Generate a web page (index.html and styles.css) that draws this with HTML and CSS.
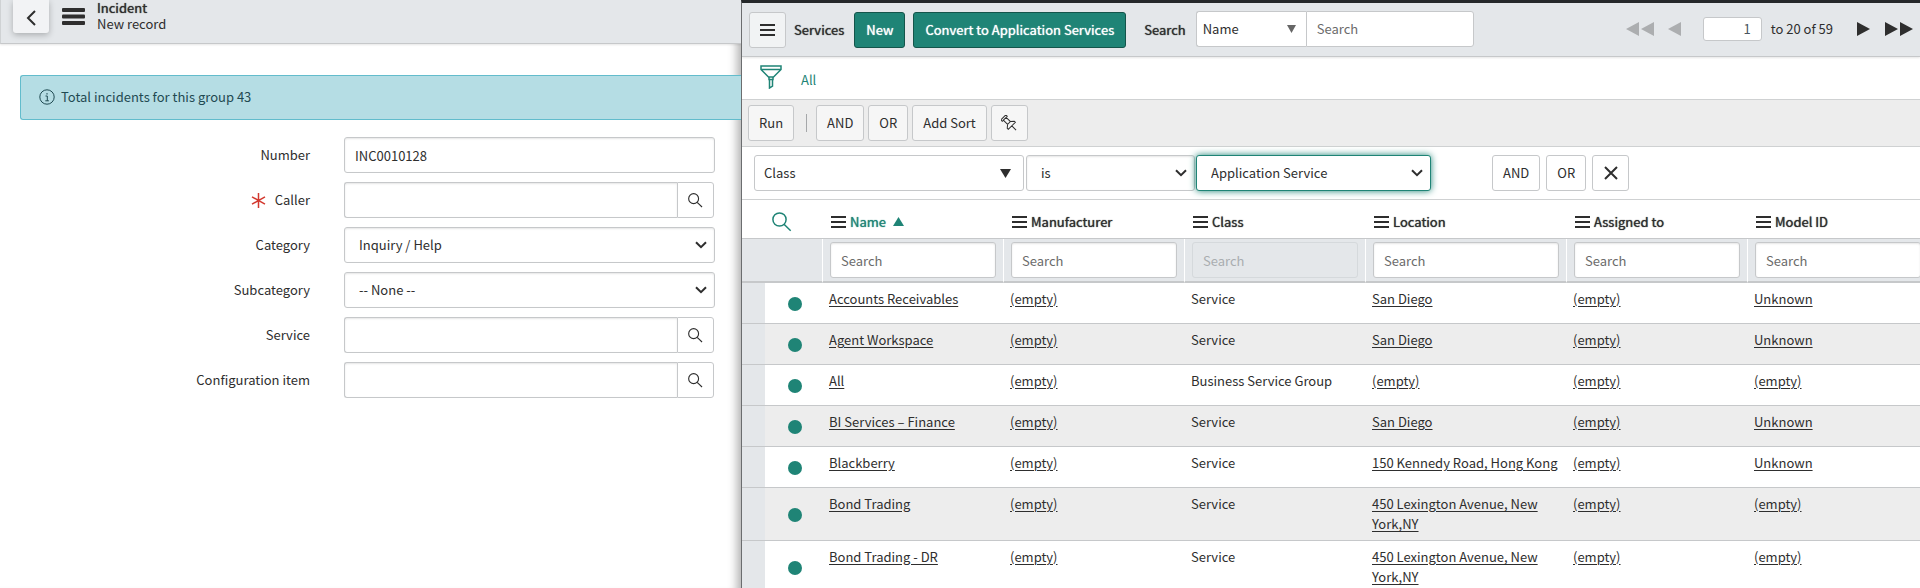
FILE: index.html
```html
<!DOCTYPE html>
<html lang="en">
<head>
<meta charset="utf-8">
<title>Incident | New record</title>
<link rel="stylesheet" href="styles.css">
</head>
<body>
<svg class="sprite" aria-hidden="true">
  <symbol id="i-search" viewBox="0 0 20 20"><circle cx="7.5" cy="7.5" r="6.6"/><path d="M12.2 12.4l1.3 1.3M13.3 13.5l5.4 5.2"/></symbol>
  <symbol id="i-chevron" viewBox="0 0 12 8"><path d="M1 1.2l5 5 5-5"/></symbol>
  <symbol id="i-menu" viewBox="0 0 15 12"><path d="M0 1h15M0 6h15M0 11h15"/></symbol>
</svg>
<div class="desktop">
  <section class="record">
    <header class="record-head">
      <button class="back" type="button" aria-label="Back"><svg width="10" height="16" viewBox="0 0 10 16"><path d="M9 1L2 8l7 7"/></svg></button>
      <svg class="burger" width="23" height="17" viewBox="0 0 23 17"><rect width="23" height="4" rx="1"/><rect y="6.5" width="23" height="4" rx="1"/><rect y="13" width="23" height="4" rx="1"/></svg>
      <h1 class="record-title"><span class="strong">Incident</span><span>New record</span></h1>
    </header>
    <div class="banner">
      <svg width="16" height="16" viewBox="0 0 16 16"><circle cx="8" cy="8" r="7.2"/><path d="M8 4v1.6M6.5 7h1.8v4.8M6.3 11.8h3.6"/></svg>
      <span>Total incidents for this group 43</span>
    </div>
    <form class="fields">
      <label for="number">Number</label>
      <input class="box" id="number" value="INC0010128">
      <label for="caller"><svg class="req" width="15" height="15" viewBox="0 0 15 15"><path d="M7.5 0v15M1 3.8l13 7.4M14 3.8L1 11.2"/></svg>Caller</label>
      <div class="lookup"><input id="caller"><button type="button" aria-label="Look up caller"><svg class="glass"><use href="#i-search"/></svg></button></div>
      <label for="category">Category</label>
      <div class="drop"><select id="category"><option>Inquiry / Help</option></select><svg class="chev"><use href="#i-chevron"/></svg></div>
      <label for="subcategory">Subcategory</label>
      <div class="drop"><select id="subcategory"><option>-- None --</option></select><svg class="chev"><use href="#i-chevron"/></svg></div>
      <label for="service">Service</label>
      <div class="lookup"><input id="service"><button type="button" aria-label="Look up service"><svg class="glass"><use href="#i-search"/></svg></button></div>
      <label for="ci">Configuration item</label>
      <div class="lookup"><input id="ci"><button type="button" aria-label="Look up configuration item"><svg class="glass"><use href="#i-search"/></svg></button></div>
    </form>
  </section>

  <section class="popup">
    <header class="list-head">
      <button class="btn pale icon" type="button" aria-label="List menu"><svg class="lines"><use href="#i-menu"/></svg></button>
      <h2 class="list-title strong">Services</h2>
      <button class="btn primary strong" type="button">New</button>
      <button class="btn primary strong convert" type="button">Convert to Application Services</button>
      <label class="search-label strong" for="field">Search</label>
      <div class="search">
        <div class="drop"><select id="field"><option>Name</option></select><svg class="tri" width="9" height="8" viewBox="0 0 9 8"><path d="M0 0h9L4.500 8z"/></svg></div>
        <input aria-label="Search text" placeholder="Search">
      </div>
      <nav class="pager" aria-label="Pages">
        <button class="off" type="button" aria-label="First page"><svg width="28" height="14" viewBox="0 0 28 14"><path d="M13 0v14L0 7zM28 0v14L15 7z"/></svg></button>
        <button class="off prev" type="button" aria-label="Previous page"><svg width="13" height="14" viewBox="0 0 13 14"><path d="M13 0v14L0 7z"/></svg></button>
        <input id="row" value="1"><label for="row">to 20 of 59</label>
        <button class="next" type="button" aria-label="Next page"><svg width="13" height="14" viewBox="0 0 13 14"><path d="M0 0v14l13-7z"/></svg></button>
        <button class="last" type="button" aria-label="Last page"><svg width="28" height="14" viewBox="0 0 28 14"><path d="M0 0v14l13-7zM15 0v14l13-7z"/></svg></button>
      </nav>
    </header>
    <div class="crumbs">
      <svg width="22" height="24" viewBox="0 0 22 24"><path d="M1 1h20v3.500L13.500 12h-5L1 4.500zM1 4.500h20M9 12v2.500h4V12M9.500 14.500h3V21l-3 2z"/></svg>
      <a href="#all">All</a>
    </div>
    <div class="filter-bar">
      <button class="btn soft" type="button">Run</button>
      <span class="rule"></span>
      <button class="btn soft" type="button">AND</button>
      <button class="btn soft" type="button">OR</button>
      <button class="btn soft" type="button">Add Sort</button>
      <button class="btn soft icon pin" type="button" aria-label="Pin filter"><svg width="16" height="16" viewBox="-8 -8 16 16"><path transform="rotate(-45)" d="M-3.500-8h7v2h-7zM-2-6h4V0h-4zM-2 0l-3 2.500V4H5V2.500L2 0M0 4v6"/></svg></button>
    </div>
    <form class="condition">
      <div class="drop class"><select aria-label="Field"><option>Class</option></select><svg class="tri" width="11" height="9" viewBox="0 0 11 9"><path d="M0 0h11L5.500 9z"/></svg></div>
      <div class="drop oper"><select aria-label="Operator"><option>is</option></select><svg class="chev"><use href="#i-chevron"/></svg></div>
      <div class="drop value"><select aria-label="Value"><option>Application Service</option></select><svg class="chev"><use href="#i-chevron"/></svg></div>
      <div class="condition-actions">
        <button class="btn" type="button">AND</button>
        <button class="btn" type="button">OR</button>
        <button class="btn icon cross" type="button" aria-label="Remove condition"><svg width="14" height="14" viewBox="0 0 14 14"><path d="M1 1l12 12M13 1L1 13"/></svg></button>
      </div>
    </form>
    <table class="grid">
      <colgroup><col class="c-gutter"><col class="c-state"><col><col><col><col class="c-loc"><col><col></colgroup>
      <thead>
        <tr class="names">
          <th colspan="2"><button class="find" type="button" aria-label="Toggle column search"><svg><use href="#i-search"/></svg></button></th>
          <th class="sorted"><span class="strong"><svg class="lines"><use href="#i-menu"/></svg>Name<svg class="asc" width="11" height="9" viewBox="0 0 11 9"><path d="M0 9h11L5.500 0z"/></svg></span></th>
          <th><span class="strong"><svg class="lines"><use href="#i-menu"/></svg>Manufacturer</span></th>
          <th><span class="strong"><svg class="lines"><use href="#i-menu"/></svg>Class</span></th>
          <th><span class="strong"><svg class="lines"><use href="#i-menu"/></svg>Location</span></th>
          <th><span class="strong"><svg class="lines"><use href="#i-menu"/></svg>Assigned to</span></th>
          <th><span class="strong"><svg class="lines"><use href="#i-menu"/></svg>Model ID</span></th>
        </tr>
        <tr class="searches">
          <td colspan="2"></td>
          <td><input class="box" aria-label="Search Name" placeholder="Search"></td>
          <td><input class="box" aria-label="Search Manufacturer" placeholder="Search"></td>
          <td><input class="box" aria-label="Search Class" placeholder="Search" disabled></td>
          <td><input class="box" aria-label="Search Location" placeholder="Search"></td>
          <td><input class="box" aria-label="Search Assigned to" placeholder="Search"></td>
          <td><input class="box" aria-label="Search Model ID" placeholder="Search"></td>
        </tr>
      </thead>
      <tbody>
        <tr><td></td><td><i class="dot"></i></td><td><a href="#r">Accounts Receivables</a></td><td><a href="#r">(empty)</a></td><td>Service</td><td><a href="#r">San Diego</a></td><td><a href="#r">(empty)</a></td><td><a href="#r">Unknown</a></td></tr>
        <tr><td></td><td><i class="dot"></i></td><td><a href="#r">Agent Workspace</a></td><td><a href="#r">(empty)</a></td><td>Service</td><td><a href="#r">San Diego</a></td><td><a href="#r">(empty)</a></td><td><a href="#r">Unknown</a></td></tr>
        <tr><td></td><td><i class="dot"></i></td><td><a href="#r">All</a></td><td><a href="#r">(empty)</a></td><td>Business Service Group</td><td><a href="#r">(empty)</a></td><td><a href="#r">(empty)</a></td><td><a href="#r">(empty)</a></td></tr>
        <tr><td></td><td><i class="dot"></i></td><td><a href="#r">BI Services – Finance</a></td><td><a href="#r">(empty)</a></td><td>Service</td><td><a href="#r">San Diego</a></td><td><a href="#r">(empty)</a></td><td><a href="#r">Unknown</a></td></tr>
        <tr><td></td><td><i class="dot"></i></td><td><a href="#r">Blackberry</a></td><td><a href="#r">(empty)</a></td><td>Service</td><td><a href="#r">150 Kennedy Road, Hong Kong</a></td><td><a href="#r">(empty)</a></td><td><a href="#r">Unknown</a></td></tr>
        <tr><td></td><td><i class="dot"></i></td><td><a href="#r">Bond Trading</a></td><td><a href="#r">(empty)</a></td><td>Service</td><td><a href="#r">450 Lexington Avenue, New York,NY</a></td><td><a href="#r">(empty)</a></td><td><a href="#r">(empty)</a></td></tr>
        <tr><td></td><td><i class="dot"></i></td><td><a href="#r">Bond Trading - DR</a></td><td><a href="#r">(empty)</a></td><td>Service</td><td><a href="#r">450 Lexington Avenue, New York,NY</a></td><td><a href="#r">(empty)</a></td><td><a href="#r">(empty)</a></td></tr>
      </tbody>
    </table>
  </section>
</div>
</body>
</html>
```
FILE: styles.css
```css
* { box-sizing: border-box; }
body, input, select, button {
  font: 13px/20px "Noto Sans CJK SC", "Noto Sans", sans-serif;
  color: #2e2e2e;
}
body { margin: 0; background: #fff; overflow: hidden; }
h1, h2 { margin: 0; font-size: 13px; font-weight: 400; }
button { margin: 0; cursor: pointer; }
svg { display: block; flex: none; fill: none; stroke: currentColor; }
input, select { margin: 0; min-width: 0; }
input::placeholder { color: #6b6b6b; opacity: 1; }
.strong { text-shadow: 0 0 1px currentColor; }
.sprite { position: absolute; width: 0; height: 0; }

.desktop {
  display: grid;
  grid-template-columns: minmax(0, 741fr) minmax(0, 1179fr);
  height: 100vh;
}

/* Shared controls */
.box, .drop select, .lookup input, .lookup button, .search input {
  height: 36px;
  border: 1px solid #c6c8ca;
  border-radius: 3px;
  background: #fff;
  box-shadow: inset 0 1px 2px rgba(0, 0, 0, .1);
}
.box { width: 100%; padding: 0 10px; }
.drop { display: grid; align-items: center; }
.drop select {
  grid-area: 1 / 1;
  width: 100%;
  padding: 0 14px;
  appearance: none;
}
.drop svg { grid-area: 1 / 1; justify-self: end; pointer-events: none; }
.chev { width: 12px; height: 8px; margin-right: 8px; stroke-width: 2; }
.tri { fill: currentColor; stroke: none; }
.lines { width: 15px; height: 12px; stroke-width: 2; }
.btn {
  display: flex;
  align-items: center;
  justify-content: center;
  height: 36px;
  padding: 0 10px;
  border: 1px solid #c6c8ca;
  border-radius: 3px;
  background: #fff;
  white-space: nowrap;
}
.btn.icon { width: 37px; padding: 0; }
.btn.pale { background: #f1f3f4; }
.btn.soft { background: #f6f6f6; }
.btn.primary {
  padding: 0 11px;
  border-color: #14554b;
  background: #1f8476;
  color: #fff;
}

/* Incident record */
.record { box-shadow: inset -12px 0 10px -8px rgba(0, 0, 0, .3); }
.record-head {
  display: flex;
  align-items: flex-start;
  height: 44px;
  padding-left: 12px;
  border-left: 1px solid #cfd2d4;
  border-bottom: 1px solid #c6c8ca;
  background: #e4e7ea;
  box-shadow: 0 1px 2px rgba(0, 0, 0, .1);
}
.back {
  display: grid;
  place-items: center;
  width: 36px;
  height: 33px;
  padding: 2px 0 0;
  border: 0;
  border-radius: 0 0 3px 3px;
  background: #f2f3f5;
  box-shadow: 0 2px 6px rgba(0, 0, 0, .25);
}
.back svg { stroke-width: 2; }
.burger { margin: 8px 12px 0 13px; fill: currentColor; stroke: none; }
.record-title { display: grid; line-height: 16px; }
.banner {
  display: flex;
  align-items: center;
  gap: 6px;
  height: 45px;
  margin: 31px 0 17px 20px;
  padding: 0 0 2px 18px;
  border: 1px solid #62bccc;
  border-right: 0;
  border-radius: 3px 0 0 3px;
  background: #b5dde4;
  color: #1f4a52;
}
.fields {
  display: grid;
  grid-template-columns: minmax(0, 310fr) minmax(0, 371fr);
  column-gap: 34px;
  row-gap: 9px;
  align-items: center;
  padding-right: 26px;
}
.fields > label { display: flex; align-items: center; justify-content: flex-end; }
.req { margin-right: 9px; color: #d3392f; stroke-width: 1.500; }
.lookup { display: grid; grid-template-columns: 1fr 37px; margin-right: 1px; }
.lookup input { padding: 0 11px; border-right: 0; border-radius: 3px 0 0 3px; }
.lookup button {
  display: grid;
  place-items: center;
  padding: 0;
  border-radius: 0 3px 3px 0;
  box-shadow: none;
}
.glass { width: 15px; height: 15px; stroke-width: 1.500; }

/* List window */
.popup {
  overflow: hidden;
  border-top: 3px solid #25282a;
  border-left: 1px solid #6b6d6f;
  background: #fff;
}
.list-head {
  display: flex;
  align-items: center;
  height: 54px;
  padding: 0 7px;
  border-bottom: 1px solid #c6c8ca;
  background: #e4e7ea;
  box-shadow: 0 1px 2px rgba(0, 0, 0, .1);
}
.list-title { margin: 0 10px 0 8px; }
.convert { margin-left: 8px; }
.search-label { margin: 0 10px 0 18px; }
.search { display: grid; grid-template-columns: 110px 168px; margin-top: -2px; }
.search select { padding: 0 6px; border-right: 0; border-radius: 3px 0 0 3px; box-shadow: none; }
.search .tri { margin-right: 10px; color: #666; }
.search input { padding: 0 10px; border-radius: 0 3px 3px 0; box-shadow: none; }
.pager { display: flex; align-items: center; margin: -2px 0 0 auto; }
.pager button { padding: 0; border: 0; background: none; }
.pager svg { fill: currentColor; stroke: none; }
.pager .off { color: #acaeb0; }
.pager .prev { margin: 0 22px 0 14px; }
.pager input {
  width: 59px;
  height: 24px;
  padding: 0 10px;
  border: 1px solid #c6c8ca;
  border-radius: 3px;
  color: #4a5560;
  text-align: right;
}
.pager label { margin: 0 24px 0 9px; }
.pager .last { margin-left: 15px; }
.crumbs {
  display: flex;
  align-items: center;
  gap: 19px;
  height: 42px;
  padding: 3px 0 0 18px;
  color: #1f8476;
}
.crumbs svg { margin-top: -6px; stroke-width: 1.500; }
.crumbs a { color: inherit; text-decoration: none; }
.filter-bar {
  display: flex;
  align-items: center;
  gap: 4px;
  height: 48px;
  padding-left: 6px;
  border: solid #cfd1d2;
  border-width: 1px 0;
  background: #ededed;
}
.rule { width: 1px; height: 18px; margin: 0 5px 0 8px; background: #a5a7a9; }
.condition {
  display: flex;
  align-items: center;
  height: 53px;
  padding: 0 12px;
  border-bottom: 1px solid #cfd1d2;
}
.class { width: 270px; margin-right: 2px; }
.class select { padding: 0 9px; box-shadow: none; }
.class .tri { margin-right: 13px; }
.oper { width: 169px; margin-right: 1px; }
.value { width: 235px; margin-right: 61px; }
.value select { border-color: #1f8476; box-shadow: 0 0 7px #1f8476; outline: 0; }
.condition-actions { display: flex; gap: 6px; }
.cross svg { stroke-width: 2; }

.grid {
  width: calc(100% + 8px);
  table-layout: fixed;
  border-collapse: separate;
  border-spacing: 0;
}
.c-gutter { width: 23px; }
.c-state { width: 57px; }
.c-loc { width: 201px; }
.grid th, .grid td { padding: 0 7px; text-align: left; font-weight: 400; }
.grid .names th { height: 39px; padding-top: 5px; border-bottom: 1px solid #c6c8ca; }
.names span { display: flex; align-items: center; gap: 4px; padding-left: 2px; }
.names .sorted span { color: #1f8476; }
.sorted .lines { color: #2e2e2e; }
.asc { margin-left: 3px; fill: currentColor; stroke: none; }
.grid .find { display: block; margin-left: 23px; padding: 0; border: 0; background: none; color: #1f8476; }
.find svg { width: 20px; height: 20px; stroke-width: 1.500; }
.grid .searches td {
  height: 44px;
  border-bottom: 2px solid #c6c8ca;
  background: #e4e7ea;
}
.searches td + td { border-left: 1px solid #fff; }
.searches .box { display: block; }
.searches .box:disabled { border-color: #d5d9dc; background: #e4e7ea; box-shadow: none; }
.searches .box:disabled::placeholder { color: #a9adb0; }
.grid tbody td {
  height: 41px;
  padding: 6px 4px 6px 7px;
  border-bottom: 1px solid #c6c8ca;
  vertical-align: top;
}
.grid tbody tr:nth-child(even) td { background: #ededed; }
.grid tbody tr td:first-child { background: #e4e7ea; }
.grid tbody tr td:nth-child(2) { padding: 2px 0 0 23px; vertical-align: middle; }
.grid tbody a { color: inherit; text-underline-offset: 2px; }
.dot { display: block; width: 14px; height: 14px; border-radius: 50%; background: #1f8476; }
```
